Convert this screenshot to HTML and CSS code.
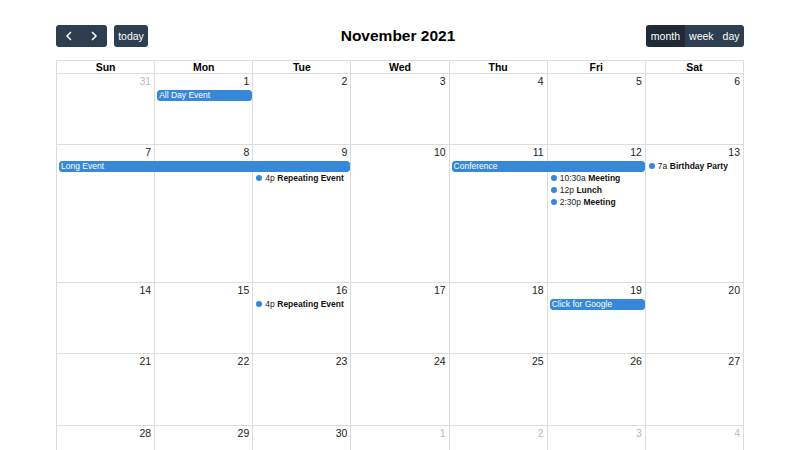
FILE: index.html
```html
<!DOCTYPE html>
<html>
<head>
<meta charset="utf-8">
<link rel="stylesheet" href="styles.css">
</head>
<body>
<div class="page">
  <div class="toolbar">
    <div class="left">
      <div class="group">
        <button class="btn icon" aria-label="prev"><svg width="8" height="10" viewBox="0 0 8 10"><path d="M6 1 L2 5 L6 9" fill="none" stroke="#fff" stroke-width="1.5"/></svg></button>
        <button class="btn icon" aria-label="next"><svg width="8" height="10" viewBox="0 0 8 10"><path d="M2 1 L6 5 L2 9" fill="none" stroke="#fff" stroke-width="1.5"/></svg></button>
      </div>
      <button class="btn today">today</button>
    </div>
    <h2 class="title">November 2021</h2>
    <div class="right">
      <div class="group">
        <button class="btn view active">month</button>
        <button class="btn view">week</button>
        <button class="btn view">day</button>
      </div>
    </div>
  </div>

  <div class="cal">
    <div class="head">
      <div class="hcell">Sun</div><div class="hcell">Mon</div><div class="hcell">Tue</div><div class="hcell">Wed</div><div class="hcell">Thu</div><div class="hcell">Fri</div><div class="hcell">Sat</div>
    </div>

    <div class="week w71">
      <div class="cell c1"><span class="num other">31</span></div>
      <div class="cell c2"><span class="num">1</span></div>
      <div class="cell c3"><span class="num">2</span></div>
      <div class="cell c4"><span class="num">3</span></div>
      <div class="cell c5"><span class="num">4</span></div>
      <div class="cell c6"><span class="num">5</span></div>
      <div class="cell c7"><span class="num">6</span></div>
      <div class="bar l2 s2 span1">All Day Event</div>
    </div>

    <div class="week w138">
      <div class="cell c1"><span class="num">7</span></div>
      <div class="cell c2"><span class="num">8</span></div>
      <div class="cell c3"><span class="num">9</span></div>
      <div class="cell c4"><span class="num">10</span></div>
      <div class="cell c5"><span class="num">11</span></div>
      <div class="cell c6"><span class="num">12</span></div>
      <div class="cell c7"><span class="num">13</span></div>
      <div class="bar l2 s1 span3">Long Event</div>
      <div class="bar l2 s5 span2">Conference</div>
      <div class="dot-ev l2 s7"><i></i>7a <b>Birthday Party</b></div>
      <div class="dot-ev l3 s3"><i></i>4p <b>Repeating Event</b></div>
      <div class="dot-ev l3 s6"><i></i>10:30a <b>Meeting</b></div>
      <div class="dot-ev l4 s6"><i></i>12p <b>Lunch</b></div>
      <div class="dot-ev l5 s6"><i></i>2:30p <b>Meeting</b></div>
    </div>

    <div class="week w71">
      <div class="cell c1"><span class="num">14</span></div>
      <div class="cell c2"><span class="num">15</span></div>
      <div class="cell c3"><span class="num">16</span></div>
      <div class="cell c4"><span class="num">17</span></div>
      <div class="cell c5"><span class="num">18</span></div>
      <div class="cell c6"><span class="num">19</span></div>
      <div class="cell c7"><span class="num">20</span></div>
      <div class="dot-ev l2 s3"><i></i>4p <b>Repeating Event</b></div>
      <div class="bar l2 s6 span1">Click for Google</div>
    </div>

    <div class="week w72">
      <div class="cell c1"><span class="num">21</span></div>
      <div class="cell c2"><span class="num">22</span></div>
      <div class="cell c3"><span class="num">23</span></div>
      <div class="cell c4"><span class="num">24</span></div>
      <div class="cell c5"><span class="num">25</span></div>
      <div class="cell c6"><span class="num">26</span></div>
      <div class="cell c7"><span class="num">27</span></div>
    </div>

    <div class="week w71">
      <div class="cell c1"><span class="num">28</span></div>
      <div class="cell c2"><span class="num">29</span></div>
      <div class="cell c3"><span class="num">30</span></div>
      <div class="cell c4"><span class="num other">1</span></div>
      <div class="cell c5"><span class="num other">2</span></div>
      <div class="cell c6"><span class="num other">3</span></div>
      <div class="cell c7"><span class="num other">4</span></div>
    </div>
  </div>
</div>
</body>
</html>
```

FILE: styles.css
```css
* { box-sizing: border-box; }
html, body { margin: 0; padding: 0; background: #fff; }
body { font-family: "Liberation Sans", Arial, sans-serif; color: #000; overflow: hidden; height: 450px; }
.page { padding: 25px 56px 0 56px; }

.toolbar { display: grid; grid-template-columns: 1fr auto 1fr; align-items: center; height: 22px; margin-bottom: 13px; }
.left { display: flex; align-items: center; gap: 7px; }
.right { display: flex; justify-content: flex-end; }
.group { display: flex; border-radius: 3px; overflow: hidden; }
.btn { font-family: "Liberation Sans", Arial, sans-serif; background: #2c3e50; color: #fff; border: 0; height: 22px; padding: 0 5px; font-size: 10.5px; line-height: 22px; margin: 0; cursor: pointer; display: flex; align-items: center; justify-content: center; }
.btn.icon { width: 25.5px; padding: 0; }
.btn.today { border-radius: 3px; width: 34px; }
.btn.view { padding: 0 4.5px; }
.btn.view.active { background: #1e2b37; }
.title { margin: 0; font-size: 15.5px; font-weight: bold; position: relative; left: -2px; }

.cal { border-top: 1px solid #ddd; border-left: 1px solid #ddd; width: 688px; }
.head { display: grid; grid-template-columns: repeat(7, 1fr); }
.hcell { height: 13px; border-right: 1px solid #ddd; border-bottom: 1px solid #ddd; font-size: 10.5px; font-weight: bold; text-align: center; line-height: 12px; }

.week { display: grid; grid-template-columns: repeat(7, 1fr); grid-template-rows: 16px repeat(4, 12px) 1fr; }
.w71 { height: 71px; }
.w72 { height: 72px; }
.w138 { height: 138px; }
.cell { grid-row: 1 / -1; border-right: 1px solid #ddd; border-bottom: 1px solid #ddd; text-align: right; padding: 1px 3px 0 0; font-size: 10.5px; line-height: 13px; }
.c1 { grid-column: 1; } .c2 { grid-column: 2; } .c3 { grid-column: 3; } .c4 { grid-column: 4; } .c5 { grid-column: 5; } .c6 { grid-column: 6; } .c7 { grid-column: 7; }
.num { font-size: 10.5px; line-height: 13px; color: #222; }
.num.other { color: #bbb; }

.l2 { grid-row: 2; } .l3 { grid-row: 3; } .l4 { grid-row: 4; } .l5 { grid-row: 5; }
.s1 { grid-column-start: 1; } .s2 { grid-column-start: 2; } .s3 { grid-column-start: 3; } .s5 { grid-column-start: 5; } .s6 { grid-column-start: 6; } .s7 { grid-column-start: 7; }
.span1 { grid-column-end: span 1; } .span2 { grid-column-end: span 2; } .span3 { grid-column-end: span 3; }

.bar { background: #3788d8; border: 1px solid #3788d8; color: #fff; border-radius: 3px; font-size: 8.5px; line-height: 9px; height: 11px; margin: 0 1px 1px 2px; padding-left: 1px; white-space: nowrap; overflow: hidden; }
.dot-ev { font-size: 8.5px; line-height: 12px; height: 12px; padding-left: 3px; white-space: nowrap; display: flex; align-items: center; color: #222; position: relative; top: -1px; }
.dot-ev i { display: inline-block; width: 6px; height: 6px; border-radius: 50%; background: #3788d8; margin-right: 3px; }
.dot-ev b { margin-left: 2.5px; font-weight: bold; color: #111; }
```
